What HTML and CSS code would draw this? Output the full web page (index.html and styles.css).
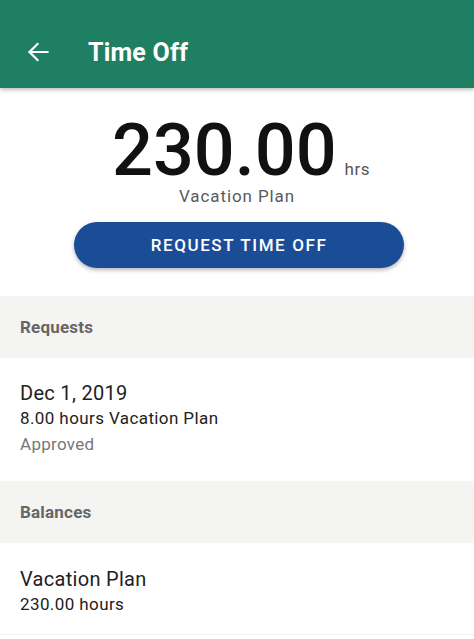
FILE: index.html
```html
<!DOCTYPE html>
<html>
<head>
<meta charset="utf-8">
<link rel="stylesheet" href="styles.css">
</head>
<body>
<header class="appbar">
  <svg class="back" width="22" height="20" viewBox="0 0 22 20">
    <path d="M20.5 10H2.5M10.5 2L2.5 10L10.5 18" fill="none" stroke="#fff" stroke-width="2.2" stroke-linecap="square" stroke-linejoin="miter"/>
  </svg>
  <h1 class="title">Time Off</h1>
</header>
<section class="summary">
  <div class="amount"><span class="num">230.00</span><span class="unit">hrs</span></div>
  <div class="plan">Vacation Plan</div>
  <button class="request">REQUEST TIME OFF</button>
</section>
<div class="section-head">Requests</div>
<div class="item">
  <div class="primary">Dec 1, 2019</div>
  <div class="secondary">8.00 hours Vacation Plan</div>
  <div class="status">Approved</div>
</div>
<div class="section-head">Balances</div>
<div class="item item-last">
  <div class="primary">Vacation Plan</div>
  <div class="secondary">230.00 hours</div>
</div>
</body>
</html>
```
FILE: styles.css
```css
* { box-sizing: border-box; }
html, body { margin: 0; padding: 0; background: #fff; }
body { font-family: Roboto, "Noto Sans", sans-serif; color: #222; }

.appbar {
  height: 88px;
  background: #1f7f63;
  display: flex;
  align-items: center;
  padding: 16px 0 0 27px;
  box-shadow: 0 2px 4px rgba(0,0,0,0.25);
  position: relative;
}
.back { display: block; margin-right: 39px; }
.title {
  margin: 0;
  font-size: 25px;
  font-weight: 700;
  color: #fff;
  letter-spacing: 0.2px;
}

.summary {
  display: flex;
  flex-direction: column;
  align-items: center;
  padding-top: 27px;
  padding-bottom: 28px;
}
.amount { font-size: 72px; line-height: 72px; margin-left: 8px; }
.num { font-size: 72px; font-weight: 500; color: #111; letter-spacing: 0; }
.unit { font-size: 17px; line-height: 20px; color: #555; margin-left: 8px; letter-spacing: 0.5px; }
.plan {
  font-size: 17px;
  line-height: 20px;
  color: #5a5a5a;
  letter-spacing: 0.9px;
  margin-top: -1px;
}
.request {
  margin-top: 16px;
  width: 330px;
  height: 46px;
  border: none;
  border-radius: 23px;
  background: #1b4d96;
  color: #fff;
  font-family: Roboto, "Noto Sans", sans-serif;
  font-size: 17px;
  font-weight: 500;
  letter-spacing: 1.6px;
  box-shadow: 0 2px 4px rgba(0,0,0,0.3);
  margin-left: 4px;
}

.section-head {
  height: 62px;
  background: #f4f4f3;
  display: flex;
  align-items: center;
  padding-left: 20px;
  font-size: 17px;
  font-weight: 700;
  color: #666;
  letter-spacing: 0.2px;
}

.item { padding: 23px 20px 24px; }
.item-last { padding-top: 24px; padding-bottom: 17px; border-bottom: 1px solid #f0f0f0; }
.primary { font-size: 20px; line-height: 24px; color: #222; letter-spacing: 0.3px; }
.secondary { font-size: 17px; line-height: 26px; color: #222; letter-spacing: 0.4px; }
.status { font-size: 17px; line-height: 26px; color: #777; letter-spacing: 0.3px; }
```
